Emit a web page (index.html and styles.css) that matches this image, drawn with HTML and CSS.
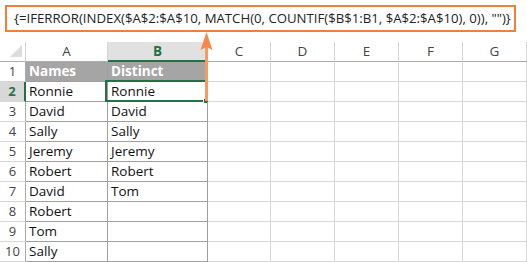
FILE: index.html
```html
<!DOCTYPE html>
<html>
	<head>
		<meta charset="UTF-8">
		<title>Distinct values</title>
		<link rel="stylesheet" href="styles.css">
	</head>
	<body>
		<div class="formula">{=IFERROR(INDEX($A$2:$A$10, MATCH(0, COUNTIF($B$1:B1, $A$2:$A$10), 0)), "")}</div>

		<div class="sheet">
			<div class="row colhead">
				<div class="cell corner"></div>
				<div class="cell">A</div>
				<div class="cell active">B</div>
				<div class="cell">C</div>
				<div class="cell">D</div>
				<div class="cell">E</div>
				<div class="cell">F</div>
				<div class="cell">G</div>
			</div>
			<div class="row">
				<div class="cell num">1</div>
				<div class="cell data title">Names</div>
				<div class="cell data title">Distinct</div>
				<div class="cell"></div><div class="cell"></div><div class="cell"></div><div class="cell"></div><div class="cell"></div>
			</div>
			<div class="row">
				<div class="cell num active">2</div>
				<div class="cell data">Ronnie</div>
				<div class="cell data selected">Ronnie</div>
				<div class="cell"></div><div class="cell"></div><div class="cell"></div><div class="cell"></div><div class="cell"></div>
			</div>
			<div class="row">
				<div class="cell num">3</div>
				<div class="cell data">David</div>
				<div class="cell data">David</div>
				<div class="cell"></div><div class="cell"></div><div class="cell"></div><div class="cell"></div><div class="cell"></div>
			</div>
			<div class="row">
				<div class="cell num">4</div>
				<div class="cell data">Sally</div>
				<div class="cell data">Sally</div>
				<div class="cell"></div><div class="cell"></div><div class="cell"></div><div class="cell"></div><div class="cell"></div>
			</div>
			<div class="row">
				<div class="cell num">5</div>
				<div class="cell data">Jeremy</div>
				<div class="cell data">Jeremy</div>
				<div class="cell"></div><div class="cell"></div><div class="cell"></div><div class="cell"></div><div class="cell"></div>
			</div>
			<div class="row">
				<div class="cell num">6</div>
				<div class="cell data">Robert</div>
				<div class="cell data">Robert</div>
				<div class="cell"></div><div class="cell"></div><div class="cell"></div><div class="cell"></div><div class="cell"></div>
			</div>
			<div class="row">
				<div class="cell num">7</div>
				<div class="cell data">David</div>
				<div class="cell data">Tom</div>
				<div class="cell"></div><div class="cell"></div><div class="cell"></div><div class="cell"></div><div class="cell"></div>
			</div>
			<div class="row">
				<div class="cell num">8</div>
				<div class="cell data">Robert</div>
				<div class="cell data"></div>
				<div class="cell"></div><div class="cell"></div><div class="cell"></div><div class="cell"></div><div class="cell"></div>
			</div>
			<div class="row">
				<div class="cell num">9</div>
				<div class="cell data">Tom</div>
				<div class="cell data"></div>
				<div class="cell"></div><div class="cell"></div><div class="cell"></div><div class="cell"></div><div class="cell"></div>
			</div>
			<div class="row">
				<div class="cell num">10</div>
				<div class="cell data">Sally</div>
				<div class="cell data"></div>
				<div class="cell"></div><div class="cell"></div><div class="cell"></div><div class="cell"></div><div class="cell"></div>
			</div>
		</div>

		<!-- pointer from the selected cell up to its formula -->
		<svg class="pointer" width="16" height="74" viewBox="0 0 16 74">
			<line x1="7.5" y1="71" x2="7.5" y2="16" stroke="#f79a62" stroke-width="3"/>
			<polygon points="7.5,2 13.5,20 7.5,17 1.5,20" fill="#f5884a"/>
		</svg>
	</body>
</html>
```

FILE: styles.css
```css
body{
	margin: 0;
	background: #FFFFFF;
	font-family: "Open Sans", "Liberation Sans", sans-serif;
	position: relative;
}

.formula{
	box-sizing: border-box;
	margin: 5px 11px 0 5px;
	height: 27px;
	border: 2px solid #f07f3c;
	padding-left: 7px;
	font-size: 13.2px;
	line-height: 22px;
	color: #222;
	white-space: nowrap;
}

.sheet{
	margin-top: 10px;
}
.row{
	display: grid;
	grid-template-columns: 26px 82px 100px 63px 64px 64px 64px 64px;
	height: 20px;
}
.cell{
	box-sizing: border-box;
	border-right: 1px solid #d6d6d6;
	border-bottom: 1px solid #d6d6d6;
	font-size: 13.5px;
	line-height: 19px;
	color: #111;
	position: relative;
	overflow: hidden;
	white-space: nowrap;
}

/* column letters */
.colhead .cell{
	text-align: center;
	color: #444;
	border-bottom-color: #ababab;
	font-size: 13.5px;
}
.colhead .cell.active{
	background: #e1e1e1;
	color: #217346;
	font-weight: bold;
	border-bottom: 2px solid #217346;
	line-height: 18px;
}
.corner::after{
	content: "";
	position: absolute;
	left: 10px;
	top: 3px;
	width: 12px;
	height: 12px;
	background: #dcdcdc;
	clip-path: polygon(100% 0, 100% 100%, 0 100%);
}

/* row numbers */
.num{
	text-align: center;
	color: #444;
	font-size: 13px;
	border-right-color: #ababab;
}
.num.active{
	background: #d8d8d8;
	color: #217346;
	font-weight: bold;
	border-right: 2px solid #217346;
}

/* the A:B table */
.data{
	padding-left: 3px;
	border-right-color: #9f9f9f;
	border-bottom-color: #9f9f9f;
}
.data.title{
	background: #a5a5a5;
	color: #FFFFFF;
	font-weight: bold;
}
.cell.selected{
	overflow: visible;
}
.cell.selected::before{
	content: "";
	position: absolute;
	left: -3px;
	top: -2px;
	right: -1px;
	bottom: -1px;
	border: 2px solid #217346;
}
.cell.selected::after{
	content: "";
	position: absolute;
	right: -2px;
	bottom: -3px;
	width: 4px;
	height: 4px;
	background: #217346;
	border: 1px solid #FFFFFF;
}

.pointer{
	position: absolute;
	left: 199px;
	top: 30px;
}
```
